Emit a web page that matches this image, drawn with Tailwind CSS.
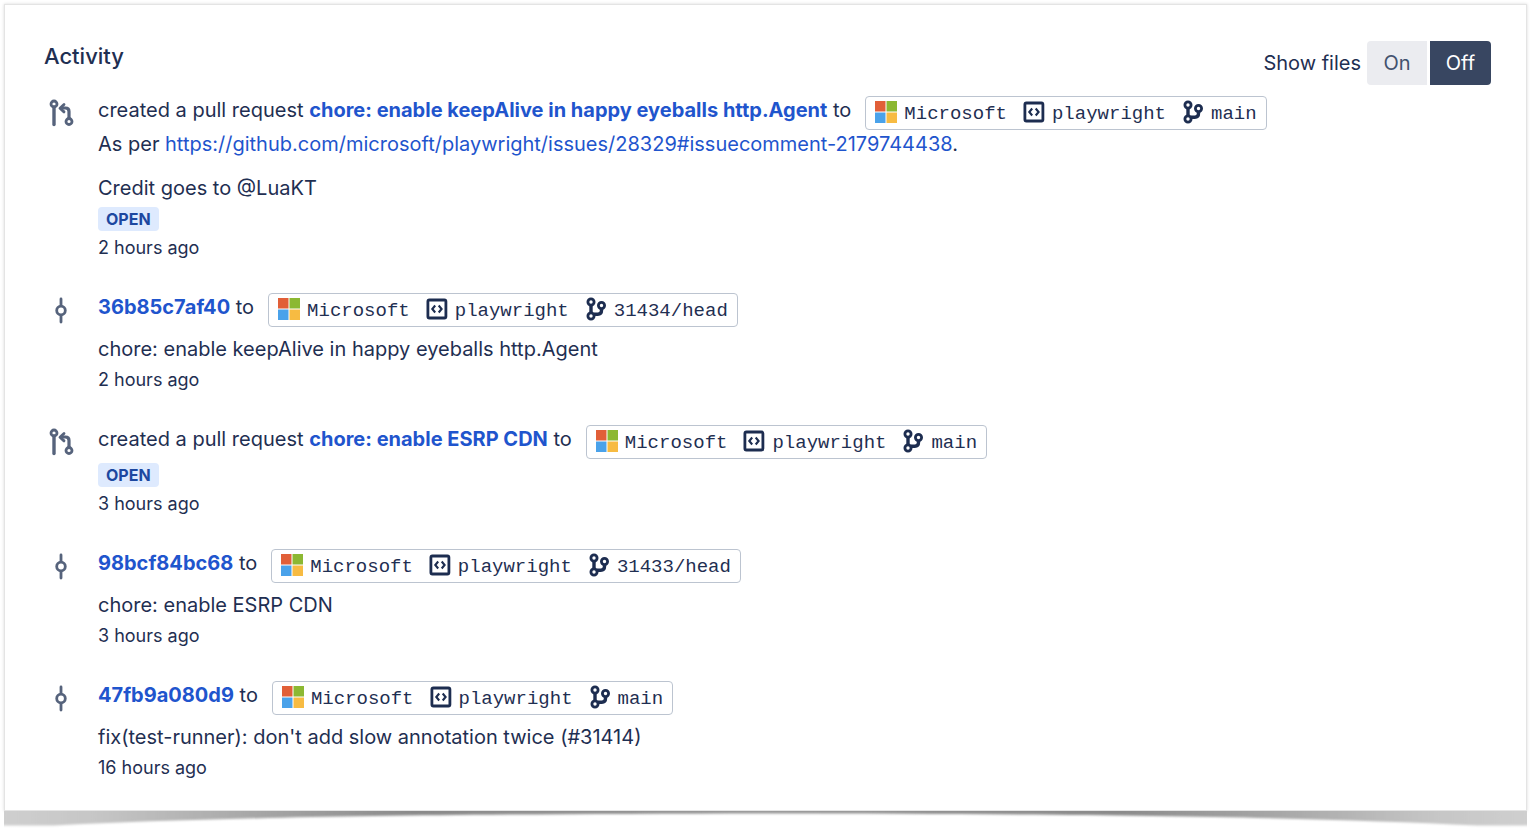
<!DOCTYPE html>
<html lang="en">
<head>
<meta charset="utf-8">
<meta name="viewport" content="width=device-width, initial-scale=1">
<title>Activity</title>
<script src="https://cdn.jsdelivr.net/npm/@tailwindcss/browser@4"></script>
</head>
<body class="bg-white font-['Inter',sans-serif] text-xl text-[#1f2f52]">
<svg class="hidden" aria-hidden="true">
  <symbol id="pull" viewBox="0 0 26 28">
    <g fill="none" stroke="#56637c" stroke-width="2.800">
      <circle cx="5" cy="5" r="3"/><path d="M5 8v17.500" stroke-width="3.400" stroke-linecap="round"/>
      <circle cx="20" cy="22.500" r="3"/><path d="M20 19.500v-7q0-3.500-3.500-3.500h-4" stroke-width="3.200"/>
      <path d="M15 5.500l-4 3.700 4 3.700" stroke-linecap="round" stroke-linejoin="round" stroke-width="2.800"/>
    </g>
  </symbol>
  <symbol id="commit" viewBox="0 0 26 28">
    <g fill="none" stroke="#56637c" stroke-width="2.800" stroke-linecap="round">
      <circle cx="12" cy="14.500" r="4.300"/><path d="M12 3v6M12 20v6"/>
    </g>
  </symbol>
  <symbol id="ms" viewBox="0 0 22 22">
    <path fill="#e15f38" d="M0 0h10.500v10.500H0z"/><path fill="#8cb832" d="M11.500 0H22v10.500H11.500z"/>
    <path fill="#4aa2ea" d="M0 11.500h10.500V22H0z"/><path fill="#f7bb42" d="M11.500 11.500H22V22H11.500z"/>
  </symbol>
  <symbol id="repo" viewBox="0 0 22 22">
    <g fill="none" stroke="#1d2d50" stroke-width="2.800" stroke-linejoin="round">
      <rect x="1.900" y="2" width="18" height="18" rx="1.500"/>
      <path d="M9.200 7.500L6.300 11l2.900 3.500M12.700 7.500l2.900 3.500-2.900 3.500" stroke-width="2.100" stroke-linejoin="miter"/>
    </g>
  </symbol>
  <symbol id="branch" viewBox="0 0 22 24">
    <g fill="none" stroke="#1d2d50" stroke-width="2.800">
      <circle cx="6" cy="5" r="3.100"/><circle cx="6" cy="19" r="3.100"/><circle cx="16.500" cy="8.500" r="3.100"/>
      <path d="M6 8v8" stroke-width="3.400"/><path d="M16.500 11.500v2q0 3.700-3.700 3.700H9" stroke-width="3.400"/>
    </g>
  </symbol>
</svg>

<div class="pt-1 pr-[9px] pl-1">
<main class="border border-[#e4e4e4] bg-white pt-9 pr-[35px] pb-[29px] pl-[39px] shadow-[0_0_3px_rgba(0,0,0,0.15)]">
  <header class="flex items-start justify-between">
    <h1 class="text-[22px] leading-[30px] font-medium">Activity</h1>
    <div class="flex items-center" role="group" aria-labelledby="files">
      <span id="files" class="mr-1.5">Show files</span>
      <button type="button" aria-pressed="false" class="h-11 w-[60px] rounded-l bg-[#ebecf0] text-[#42526e]">On</button>
      <button type="button" aria-pressed="true" class="ml-[3px] h-11 w-[61px] rounded-r bg-[#384661] text-white">Off</button>
    </div>
  </header>

  <ul class="mt-[11px] flex flex-col gap-8">
    <li class="flex">
      <svg class="mt-[3px] mr-[23px] ml-[5px] h-7 w-[26px] shrink-0"><use href="#pull"/></svg>
      <div>
        <div class="flex flex-wrap items-start gap-x-3.5 leading-7">
          <p>created a pull request <a href="#" class="font-bold text-[#1f55cd]">chore: enable keepAlive in happy eyeballs http.Agent</a> to</p>
          <div class="flex h-[34px] items-center rounded border border-[#bcc4d0] px-[9px] pt-0.5 font-['Liberation_Mono',monospace] text-[19px]">
            <svg class="mr-[7px] mb-1 size-[22px]"><use href="#ms"/></svg><span>Microsoft</span>
            <svg class="mr-[7px] mb-1 ml-4 size-[22px]"><use href="#repo"/></svg><span>playwright</span>
            <svg class="mr-[7px] mb-1 ml-4 h-6 w-[22px]"><use href="#branch"/></svg><span>main</span>
          </div>
        </div>
        <div class="leading-7">
          <p>As per <a href="#" class="text-[#1f55cd]">https://github.com/microsoft/playwright/issues/28329#issuecomment-2179744438</a>.</p>
          <p class="mt-4">Credit goes to @LuaKT</p>
        </div>
        <span class="mt-[5px] flex h-6 w-fit items-center rounded bg-[#deeafe] px-2 text-base font-bold text-[#1d48a0]">OPEN</span>
        <time class="mt-1 block text-lg leading-[26px]">2 hours ago</time>
      </div>
    </li>

    <li class="flex">
      <svg class="mt-[3px] mr-[23px] ml-[5px] h-7 w-[26px] shrink-0"><use href="#commit"/></svg>
      <div>
        <div class="flex flex-wrap items-start gap-x-3.5 leading-7">
          <p><a href="#" class="font-bold text-[#1f55cd]">36b85c7af40</a> to</p>
          <div class="flex h-[34px] items-center rounded border border-[#bcc4d0] px-[9px] pt-0.5 font-['Liberation_Mono',monospace] text-[19px]">
            <svg class="mr-[7px] mb-1 size-[22px]"><use href="#ms"/></svg><span>Microsoft</span>
            <svg class="mr-[7px] mb-1 ml-4 size-[22px]"><use href="#repo"/></svg><span>playwright</span>
            <svg class="mr-[7px] mb-1 ml-4 h-6 w-[22px]"><use href="#branch"/></svg><span>31434/head</span>
          </div>
        </div>
        <p class="mt-2 leading-7">chore: enable keepAlive in happy eyeballs http.Agent</p>
        <time class="mt-1 block text-lg leading-[26px]">2 hours ago</time>
      </div>
    </li>

    <li class="flex">
      <svg class="mt-[3px] mr-[23px] ml-[5px] h-7 w-[26px] shrink-0"><use href="#pull"/></svg>
      <div>
        <div class="flex flex-wrap items-start gap-x-3.5 leading-7">
          <p>created a pull request <a href="#" class="font-bold text-[#1f55cd]">chore: enable ESRP CDN</a> to</p>
          <div class="flex h-[34px] items-center rounded border border-[#bcc4d0] px-[9px] pt-0.5 font-['Liberation_Mono',monospace] text-[19px]">
            <svg class="mr-[7px] mb-1 size-[22px]"><use href="#ms"/></svg><span>Microsoft</span>
            <svg class="mr-[7px] mb-1 ml-4 size-[22px]"><use href="#repo"/></svg><span>playwright</span>
            <svg class="mr-[7px] mb-1 ml-4 h-6 w-[22px]"><use href="#branch"/></svg><span>main</span>
          </div>
        </div>
        <span class="mt-1 flex h-6 w-fit items-center rounded bg-[#deeafe] px-2 text-base font-bold text-[#1d48a0]">OPEN</span>
        <time class="mt-1 block text-lg leading-[26px]">3 hours ago</time>
      </div>
    </li>

    <li class="flex">
      <svg class="mt-[3px] mr-[23px] ml-[5px] h-7 w-[26px] shrink-0"><use href="#commit"/></svg>
      <div>
        <div class="flex flex-wrap items-start gap-x-3.5 leading-7">
          <p><a href="#" class="font-bold text-[#1f55cd]">98bcf84bc68</a> to</p>
          <div class="flex h-[34px] items-center rounded border border-[#bcc4d0] px-[9px] pt-0.5 font-['Liberation_Mono',monospace] text-[19px]">
            <svg class="mr-[7px] mb-1 size-[22px]"><use href="#ms"/></svg><span>Microsoft</span>
            <svg class="mr-[7px] mb-1 ml-4 size-[22px]"><use href="#repo"/></svg><span>playwright</span>
            <svg class="mr-[7px] mb-1 ml-4 h-6 w-[22px]"><use href="#branch"/></svg><span>31433/head</span>
          </div>
        </div>
        <p class="mt-2 leading-7">chore: enable ESRP CDN</p>
        <time class="mt-1 block text-lg leading-[26px]">3 hours ago</time>
      </div>
    </li>

    <li class="flex">
      <svg class="mt-[3px] mr-[23px] ml-[5px] h-7 w-[26px] shrink-0"><use href="#commit"/></svg>
      <div>
        <div class="flex flex-wrap items-start gap-x-3.5 leading-7">
          <p><a href="#" class="font-bold text-[#1f55cd]">47fb9a080d9</a> to</p>
          <div class="flex h-[34px] items-center rounded border border-[#bcc4d0] px-[9px] pt-0.5 font-['Liberation_Mono',monospace] text-[19px]">
            <svg class="mr-[7px] mb-1 size-[22px]"><use href="#ms"/></svg><span>Microsoft</span>
            <svg class="mr-[7px] mb-1 ml-4 size-[22px]"><use href="#repo"/></svg><span>playwright</span>
            <svg class="mr-[7px] mb-1 ml-4 h-6 w-[22px]"><use href="#branch"/></svg><span>main</span>
          </div>
        </div>
        <p class="mt-2 leading-7">fix(test-runner): don't add slow annotation twice (#31414)</p>
        <time class="mt-1 block text-lg leading-[26px]">16 hours ago</time>
      </div>
    </li>
  </ul>
</main>
<!-- curled-paper shadow under the card -->
<svg class="block h-5 w-full" viewBox="0 0 1524 20" preserveAspectRatio="none" aria-hidden="true">
  <defs>
    <linearGradient id="shade">
      <stop offset="0" stop-color="#cfcfcf"/><stop offset=".06" stop-color="#c6c6c6"/><stop offset=".16" stop-color="#a8a8a8"/><stop offset=".27" stop-color="#8a8a8a"/>
      <stop offset=".5" stop-color="#999"/>
      <stop offset=".73" stop-color="#8a8a8a"/><stop offset=".84" stop-color="#a8a8a8"/><stop offset=".94" stop-color="#c6c6c6"/><stop offset="1" stop-color="#cfcfcf"/>
    </linearGradient>
    <filter id="soft" x="-1%" y="-50%" width="102%" height="200%"><feGaussianBlur stdDeviation="0 1"/></filter>
  </defs>
  <path filter="url(#soft)" fill="url(#shade)" d="M0-6H1524V14.500H1474C1300 6 1100 3 762 2.500C424 3 224 6 50 14.500H0z"/>
</svg>
</div>
</body>
</html>
